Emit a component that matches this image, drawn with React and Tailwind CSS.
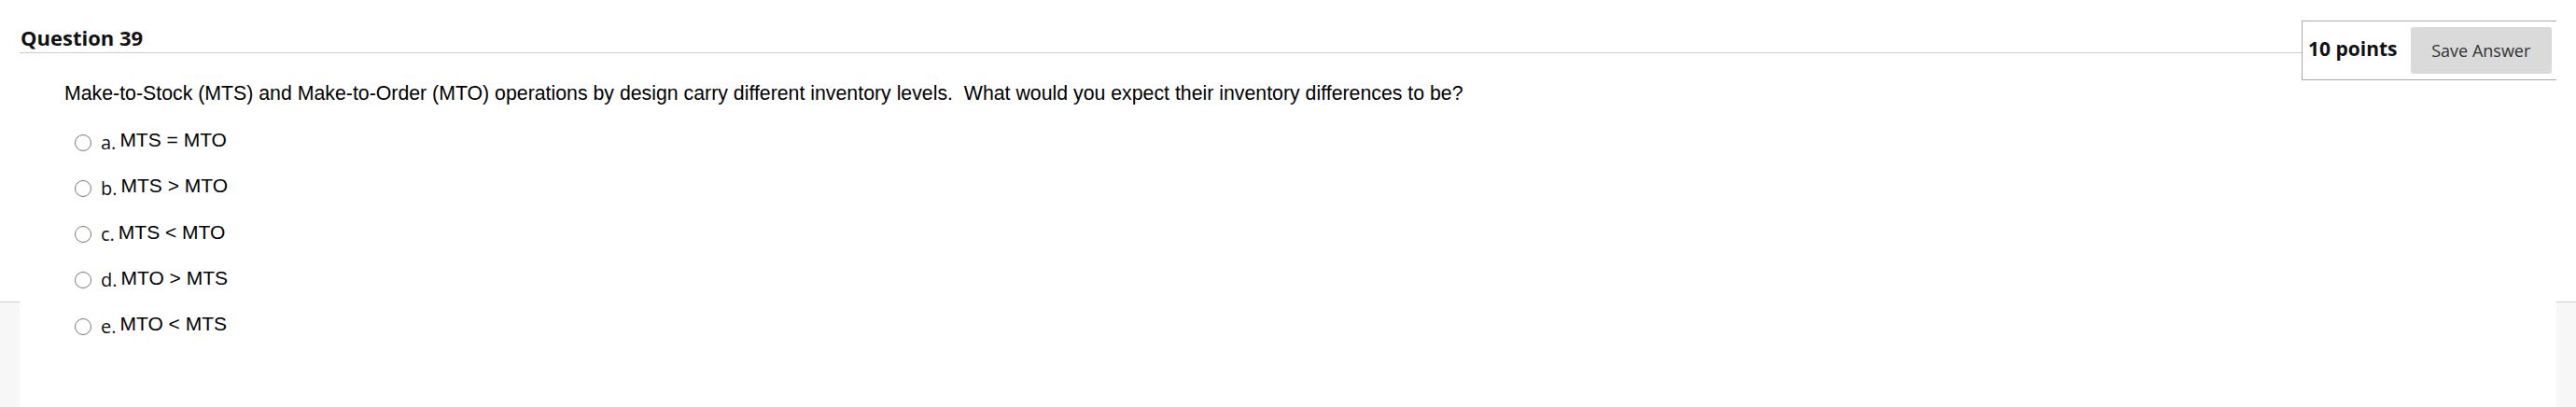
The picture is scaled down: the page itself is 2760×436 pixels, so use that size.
import React from 'react';

const OPTIONS = [
    { key: 'a.', text: 'MTS = MTO' },
    { key: 'b.', text: 'MTS > MTO' },
    { key: 'c.', text: 'MTS < MTO' },
    { key: 'd.', text: 'MTO > MTS' },
    { key: 'e.', text: 'MTO < MTS' },
];

const SideStrip = () => (
    <div className="w-[21px] flex flex-col">
        <div className="h-[323px] bg-white" />
        <div className="flex-1 border-t border-[#cccccc] bg-[#f7f7f7]" />
    </div>
);

const App = () => {
    return (
        <div className="w-[2760px] h-[436px] flex bg-white overflow-hidden">
            <SideStrip />
            <div className="flex-1 bg-white flex flex-col">
                <div className="h-[57px] flex items-start">
                    <div className="flex-1 h-[57px] border-b border-[#cccccc] pt-[25px] pl-[1px]">
                        <h2 className="text-[22px] leading-[30px] font-bold text-[#111] font-['Open_Sans',sans-serif]">Question 39</h2>
                    </div>
                    <div className="mt-[22px] mr-[-2px] h-[64px] w-[275px] shrink-0 border border-[#aaaaaa] bg-white flex items-center pl-[6px] pr-[6px] gap-[14px]">
                        <span className="mb-[3px] text-[21px] font-bold text-[#111] font-['Open_Sans',sans-serif] whitespace-nowrap">10 points</span>
                        <button className="h-[50px] flex-1 rounded-[3px] bg-[#dadada] text-[18px] text-[#333] font-['Open_Sans',sans-serif]">Save Answer</button>
                    </div>
                </div>
                <p className="mt-[29px] pl-[48px] text-[21.3px] leading-[28px] text-black font-['Liberation_Sans',Arial,sans-serif] whitespace-pre">
                    Make-to-Stock (MTS) and Make-to-Order (MTO) operations by design carry different inventory levels.  What would you expect their inventory differences to be?
                </p>
                <ul className="mt-[14px] pl-[59px]">
                    {OPTIONS.map(o => (
                        <li key={o.key} className="h-[49.25px] flex items-center">
                            <span className="w-[18px] h-[18px] rounded-full border-[1.5px] border-[#7a7a7a] bg-white shrink-0" />
                            <span className="ml-[10px] text-[20px] text-[#111] font-['Open_Sans',sans-serif]">{o.key}</span>
                            <span className="ml-[4px] mb-[5px] text-[21px] leading-[24px] text-black font-['Liberation_Sans',Arial,sans-serif]">{o.text}</span>
                        </li>
                    ))}
                </ul>
            </div>
            <SideStrip />
        </div>
    );
};

export default App;
